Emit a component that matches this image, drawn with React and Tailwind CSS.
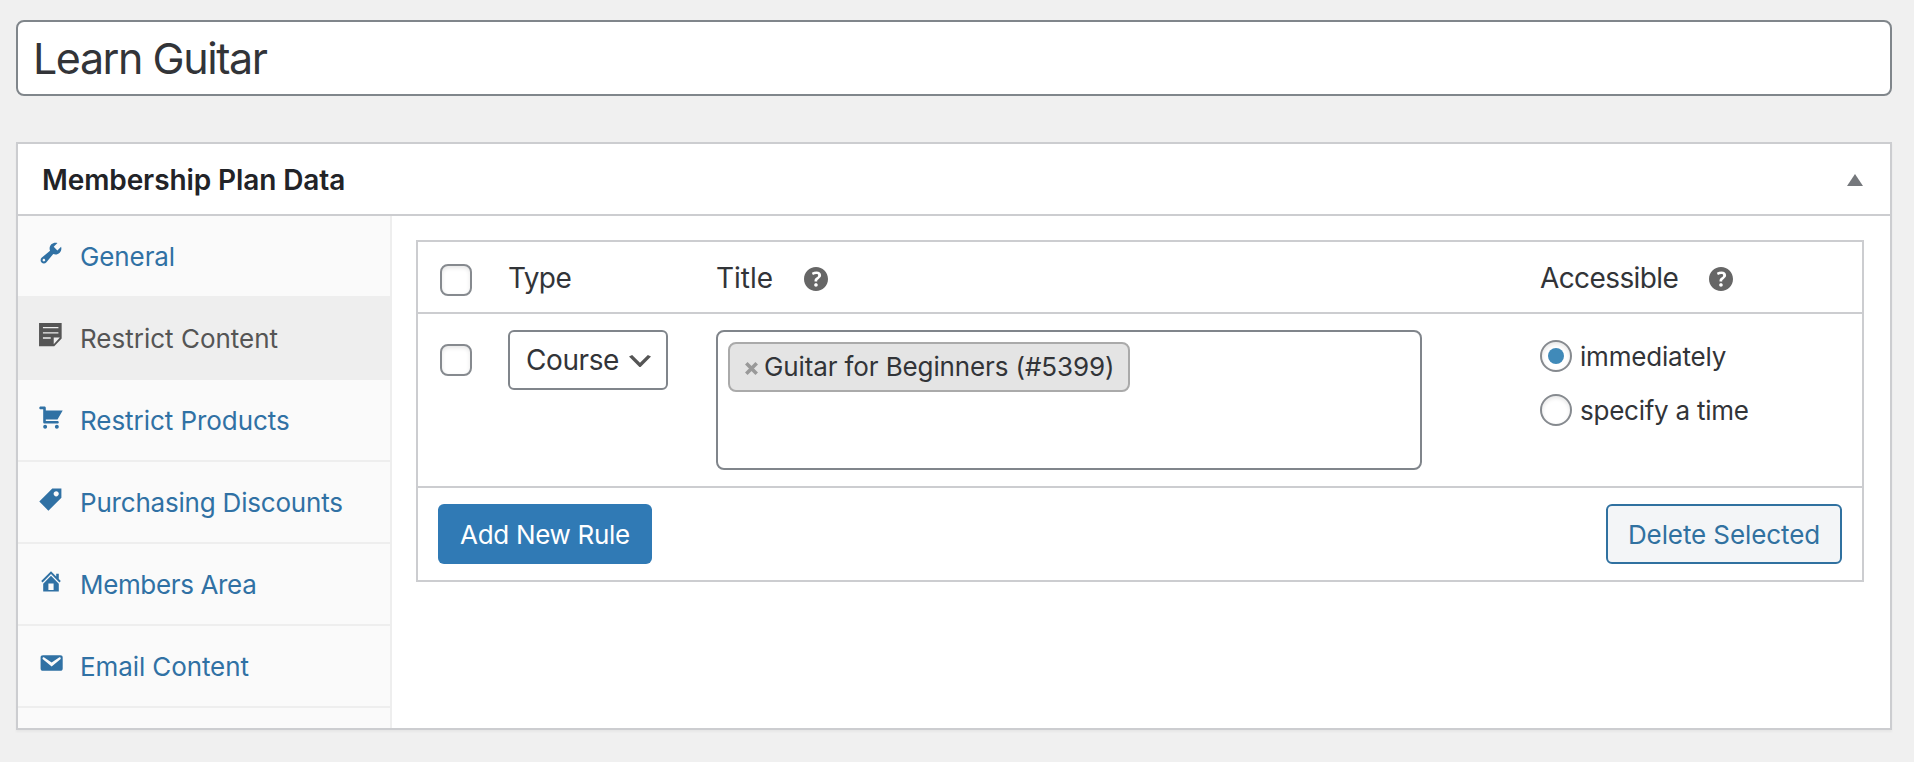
import { useState } from 'react';

const tabs = [
  {
    label: 'General',
    text: 'tracking-[-0.1px]',
    icon: <path d="M16.68 9.77c-1.34 1.34-3.3 1.67-4.95.99l-5.41 6.52c-.99.99-2.59.99-3.58 0s-.99-2.59 0-3.57l6.52-5.42c-.68-1.65-.35-3.61.99-4.95 1.28-1.28 3.12-1.62 4.72-1.06l-2.89 2.89 2.82 2.82 2.86-2.87c.53 1.58.18 3.39-1.08 4.65zM3.81 16.21c.4.39 1.04.39 1.43 0 .4-.4.4-1.04 0-1.43-.39-.4-1.03-.4-1.43 0-.39.39-.39 1.03 0 1.43z" />,
  },
  {
    label: 'Restrict Content',
    text: '',
    icon: <path fillRule="evenodd" d="M.8.8h17.4v11.9l-5.7 6H.8zM3.8 3.9v1h11.9v-1zM3.8 7.8v1h11.9v-1zM3.8 11.8v1h6v-1zM12.1 12v5.1l4.7-5.1z" />,
  },
  {
    label: 'Restrict Products',
    text: 'tracking-[-0.05px]',
    icon: <path d="M6 13h9c.55 0 1 .45 1 1s-.45 1-1 1H5c-.55 0-1-.45-1-1V4H2c-.55 0-1-.45-1-1s.45-1 1-1h3c.55 0 1 .45 1 1v2h13l-4 7H6v1zm-.5 3c.83 0 1.5.67 1.5 1.5S6.33 19 5.5 19 4 18.33 4 17.5 4.67 16 5.5 16zm9 0c.83 0 1.5.67 1.5 1.5s-.67 1.5-1.5 1.5-1.5-.67-1.5-1.5.67-1.5 1.5-1.5z" />,
  },
  {
    label: 'Purchasing Discounts',
    text: 'tracking-[-0.2px]',
    icon: <path d="M11 2h7v7L8 19l-7-7zm3 6c1.1 0 2-.9 2-2s-.9-2-2-2-2 .9-2 2 .9 2 2 2z" />,
  },
  {
    label: 'Members Area',
    text: 'tracking-[-0.35px]',
    icon: <path d="M16 8.5l1.53 1.53-1.06 1.06L10 4.6l-6.47 6.49-1.06-1.06L10 2.5l4 4v-2h2v4zm-6-2.46l6 5.99V18H4v-5.97zM12 17v-5H8v5h4z" />,
  },
  {
    label: 'Email Content',
    text: 'tracking-[-0.1px]',
    icon: <path d="M3.87 4h13.25C18.37 4 19 4.59 19 5.79v8.42c0 1.19-.63 1.79-1.88 1.79H3.87c-1.25 0-1.88-.6-1.88-1.79V5.79c0-1.2.63-1.79 1.88-1.79zm6.62 8.6l6.74-5.53c.24-.2.43-.66.13-1.07-.29-.41-.82-.42-1.17-.17l-5.7 3.86L4.8 5.83c-.35-.25-.88-.24-1.17.17-.3.41-.11.87.13 1.07z" />,
  },
];

function HelpTip() {
  return (
    <svg className="w-6 h-6 mt-0.5 fill-[#666]" viewBox="3 3 14 14">
      <path d="M17 10c0-3.87-3.14-7-7-7-3.87 0-7 3.13-7 7s3.13 7 7 7c3.86 0 7-3.13 7-7zm-6.3 1.48H9.14v-.43c0-.38.08-.7.24-.98s.46-.57.88-.89c.41-.29.68-.53.81-.71.14-.18.2-.39.2-.62 0-.25-.09-.44-.28-.58-.19-.13-.45-.19-.79-.19-.58 0-1.25.19-2 .57l-.64-1.28c.87-.49 1.8-.74 2.77-.74.81 0 1.45.2 1.92.58.48.39.71.91.71 1.55 0 .43-.09.8-.29 1.11-.19.32-.57.67-1.11 1.06-.38.28-.61.49-.71.63-.1.15-.15.34-.15.57v.35zm-1.47 2.74c-.18-.17-.27-.42-.27-.73 0-.33.08-.58.26-.75s.43-.25.77-.25c.32 0 .57.09.75.26s.27.42.27.74c0 .3-.09.55-.27.72-.18.18-.43.27-.75.27-.33 0-.58-.09-.76-.27z" />
    </svg>
  );
}

function Checkbox({ label }) {
  return (
    <input
      type="checkbox"
      aria-label={label}
      className="appearance-none block w-8 h-8 border-2 border-[#868a8f] rounded-lg bg-white shadow-[inset_0_2px_4px_rgba(0,0,0,0.1)] checked:bg-[#307ab5]"
    />
  );
}

function Radio({ label, checked, onChange, className }) {
  return (
    <label className="flex items-center h-8">
      <span className="relative flex items-center justify-center w-8 h-8">
        <input
          type="radio"
          name="accessible"
          checked={checked}
          onChange={onChange}
          className="appearance-none w-8 h-8 border-2 border-[#868a8f] rounded-full bg-white shadow-[inset_0_2px_4px_rgba(0,0,0,0.1)]"
        />
        {checked && <span className="absolute w-4 h-4 rounded-full bg-[#408ab9]" />}
      </span>
      <span className={`ml-2 pt-0.5 text-[26px] leading-8 ${className}`}>{label}</span>
    </label>
  );
}

function Sidebar({ active, onSelect }) {
  return (
    <ul className="w-[374px] shrink-0 bg-[#fafafa] border-r-2 border-[#eee]">
      {tabs.map((tab) => (
        <li
          key={tab.label}
          onClick={() => onSelect(tab.label)}
          className={`flex h-[82px] pl-5 border-b-2 border-[#eee] cursor-pointer ${
            tab.label === active ? 'bg-[#eee] text-[#555] -mr-0.5' : 'text-[#3071a4]'
          }`}
        >
          <svg className="w-[26px] h-[26px] mt-6 shrink-0" viewBox="0 0 20 20" fill="currentColor">{tab.icon}</svg>
          <span className={`ml-4 text-[26px] leading-[82px] whitespace-nowrap ${tab.text}`}>{tab.label}</span>
        </li>
      ))}
    </ul>
  );
}

function RulesTable() {
  const [access, setAccess] = useState('immediately');

  return (
    <div className="w-[1448px] h-[342px] border-2 border-[#cccdd0]">
      <div className="grid grid-cols-[90px_208px_824px_1fr] items-center h-[72px] border-b-2 border-[#cccdd0] text-[28px]">
        <div className="pl-[22px] pt-1.5"><Checkbox label="Select all" /></div>
        <div className="tracking-[-0.6px] pt-0.5">Type</div>
        <div className="flex items-center gap-[31px] pt-0.5">Title <HelpTip /></div>
        <div className="flex items-center gap-[31px] pt-0.5">
          <span className="tracking-[-0.6px]">Accessible</span>
          <HelpTip />
        </div>
      </div>

      <div className="grid grid-cols-[90px_208px_824px_1fr] items-start h-[174px] pt-4 border-b-2 border-[#cccdd0]">
        <div className="pl-[22px] pt-3.5"><Checkbox label="Select rule" /></div>
        <button className="flex items-center w-40 h-[60px] pl-4 border-2 border-[#80858b] rounded-md bg-white text-[28px] tracking-[-0.4px]">
          Course
          <svg className="w-[22px] h-[12.6px] ml-2.5 mt-0.5 fill-[#555]" viewBox="3 6 14 8"><path d="M5 6l5 5 5-5 2 1-7 7-7-7 2-1z" /></svg>
        </button>
        <div className="w-[706px] h-[140px] p-2.5 border-2 border-[#80858b] rounded-lg bg-white">
          <div className="flex items-center w-[402px] h-[50px] pl-[15px] border-2 border-[#aaa] rounded-lg bg-[#e4e4e4]">
            <svg className="w-[13px] h-[13px] mt-[3px]" viewBox="0 0 13 13" fill="none" stroke="#999" strokeWidth="3.6"><path d="M1.3 1.3l10.4 10.4M11.7 1.3L1.3 11.7" /></svg>
            <span className="ml-1.5 text-[26px] leading-8 tracking-[-0.12px] whitespace-nowrap">Guitar for Beginners (#5399)</span>
          </div>
        </div>
        <div className="flex flex-col gap-[22px] pt-2.5">
          <Radio label="immediately" className="tracking-[-0.2px]" checked={access === 'immediately'} onChange={() => setAccess('immediately')} />
          <Radio label="specify a time" className="tracking-[-0.25px]" checked={access === 'specify'} onChange={() => setAccess('specify')} />
        </div>
      </div>

      <div className="flex justify-between px-5 py-4 text-[26px]">
        <button className="w-[214px] h-[60px] rounded-md bg-[#307ab5] text-white tracking-[-0.3px]">Add New Rule</button>
        <button className="w-[236px] h-[60px] border-2 border-[#3071a0] rounded-md bg-[#f3f5f7] text-[#3071a0] tracking-[-0.1px]">Delete Selected</button>
      </div>
    </div>
  );
}

export default function App() {
  const [active, setActive] = useState('Restrict Content');

  return (
    <div className="h-[762px] overflow-hidden px-4 pt-5 bg-[#f0f0f0] font-['Inter','Liberation_Sans',sans-serif] text-[#323438]">
      <input
        type="text"
        defaultValue="Learn Guitar"
        className="block w-[1876px] h-[76px] pl-[15px] border-2 border-[#80868b] rounded-lg bg-white text-[43px] tracking-[-1.45px] outline-none"
      />

      <section className="w-[1876px] h-[588px] mt-[46px] border-2 border-[#cccdd0] bg-white shadow-[0_2px_2px_rgba(0,0,0,0.04)]">
        <header className="flex items-center justify-between h-[72px] pl-6 pr-[7px] border-b-2 border-[#cccdd0]">
          <h2 className="pt-0.5 text-[28px] font-semibold tracking-[-0.1px] text-[#222327]">Membership Plan Data</h2>
          <svg className="w-4 h-3 mr-5 mt-0.5 fill-[#75787c]" viewBox="0 0 16 12"><path d="M8 0l8 12H0z" /></svg>
        </header>
        <div className="flex h-[512px] overflow-hidden">
          <Sidebar active={active} onSelect={setActive} />
          <div className="p-6"><RulesTable /></div>
        </div>
      </section>
    </div>
  );
}
